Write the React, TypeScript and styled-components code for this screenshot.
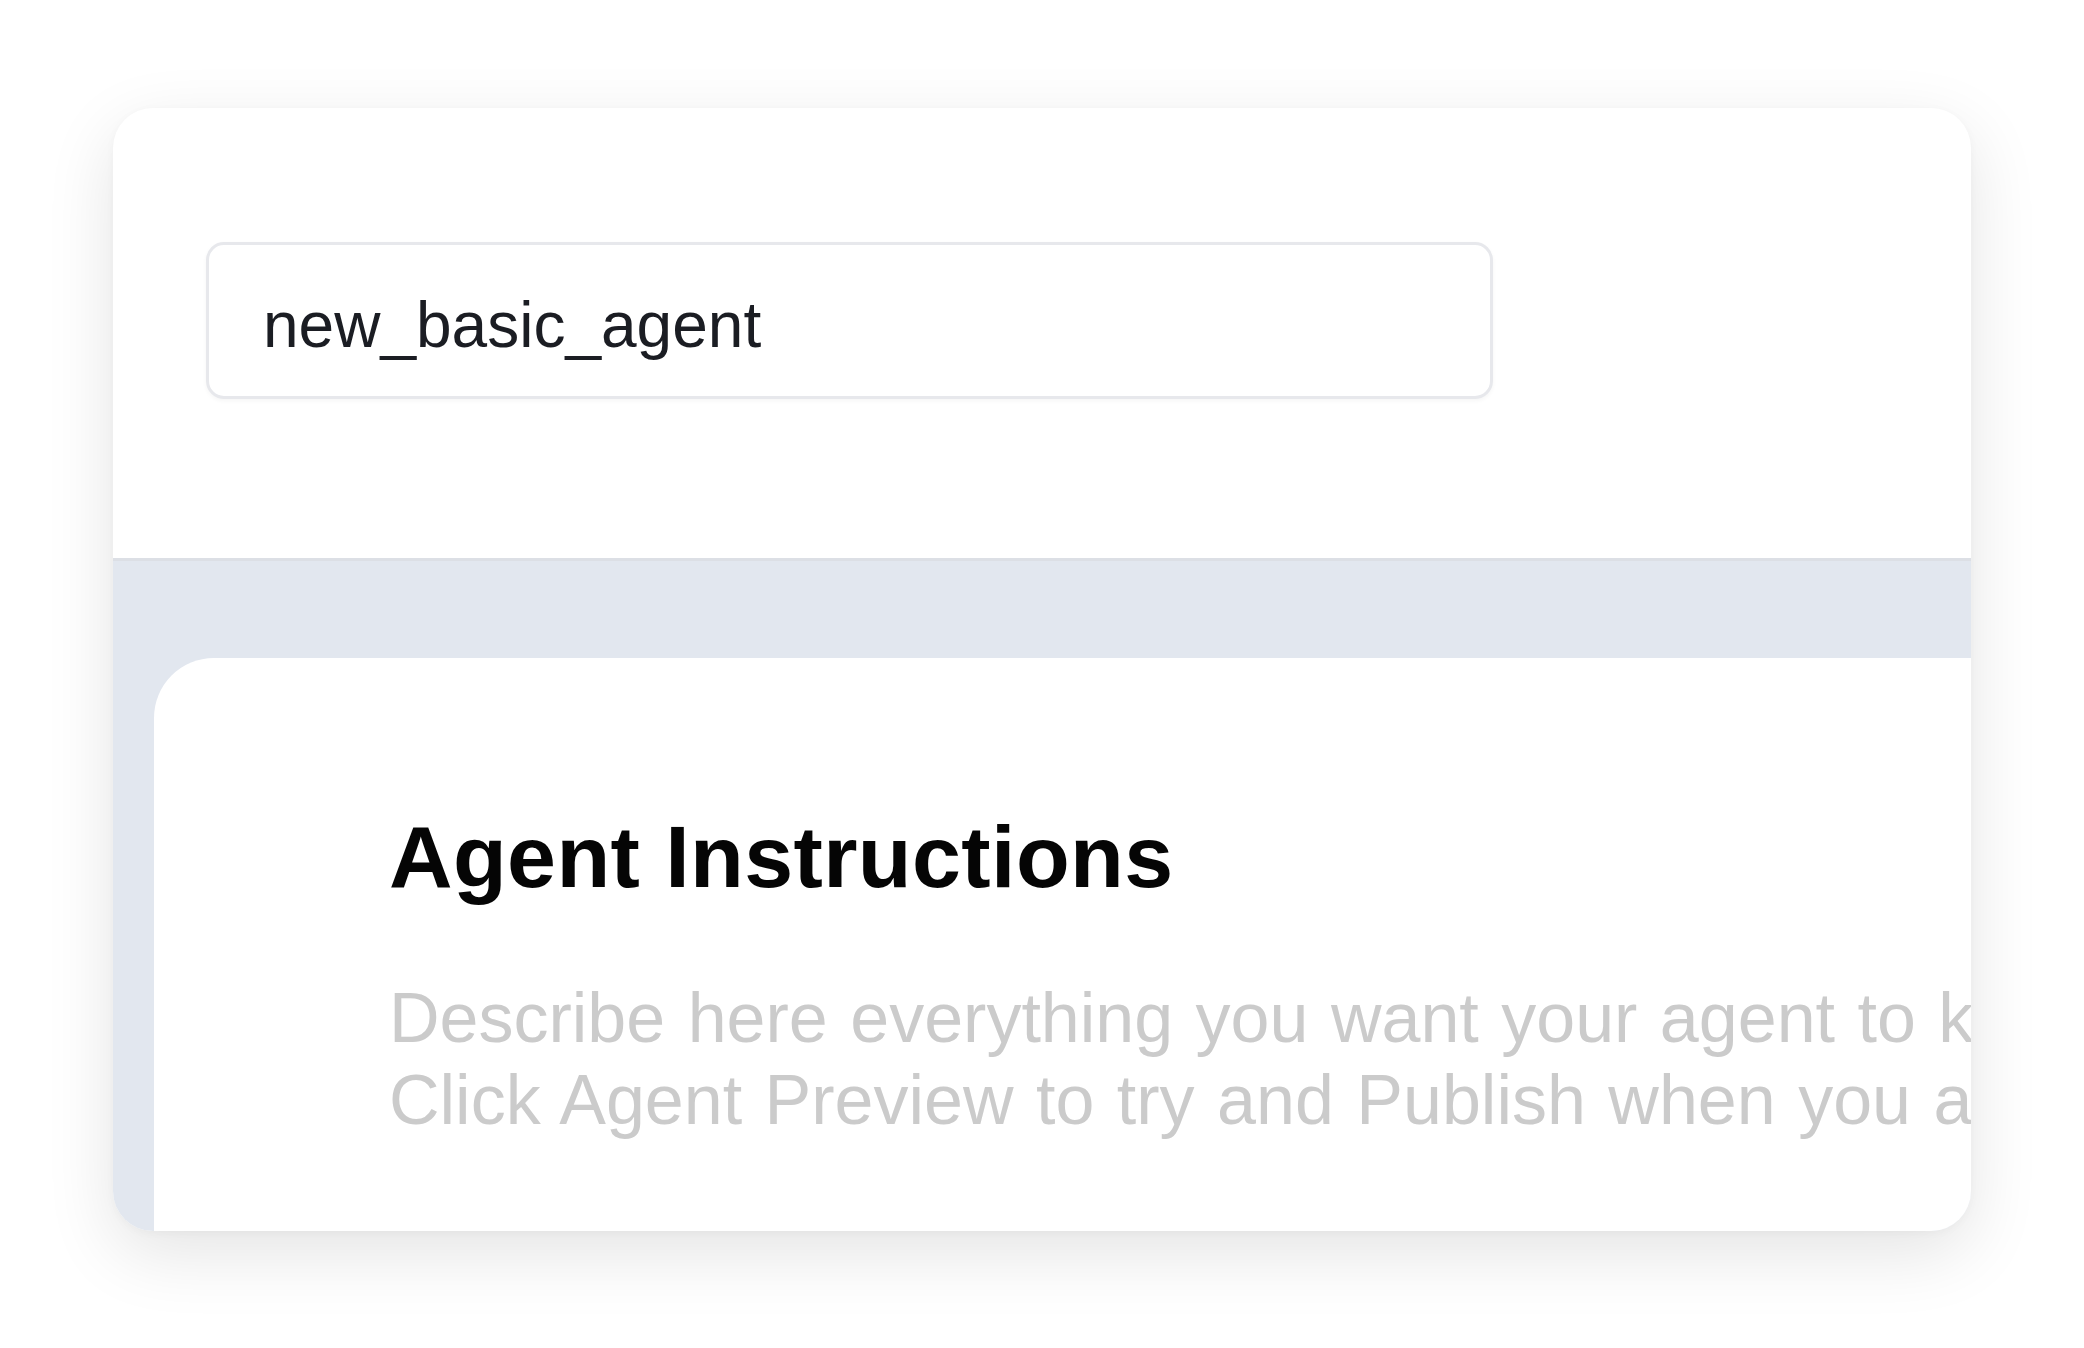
import React from 'react'
import styled, { createGlobalStyle } from 'styled-components'

const GlobalStyle = createGlobalStyle`
  html, body {
    margin: 0;
    padding: 0;
    background: #ffffff;
  }
  body {
    font-family: 'Liberation Sans', Arial, sans-serif;
    width: 2084px;
    height: 1348px;
    overflow: hidden;
  }
`

const Stage = styled.div`
  padding: 108px 113px 0 113px;
`

const Card = styled.div`
  width: 1858px;
  height: 1123px;
  display: flex;
  flex-direction: column;
  background: #ffffff;
  border-radius: 40px;
  overflow: hidden;
  box-shadow: 0 22px 70px rgba(0, 0, 0, 0.11), 0 2px 10px rgba(0, 0, 0, 0.03);
`

const Header = styled.div`
  height: 450px;
  flex-shrink: 0;
  box-sizing: border-box;
  padding: 134px 0 0 93px;
`

const NameField = styled.div`
  width: 1287px;
  height: 157px;
  box-sizing: border-box;
  display: flex;
  align-items: center;
  padding: 8px 0 0 54px;
  border: 3px solid #e7e8ec;
  border-radius: 18px;
  box-shadow: 0 2px 4px rgba(0, 0, 0, 0.04);
  font-size: 64px;
  color: #1b1d23;
`

const Band = styled.div`
  flex: 1;
  display: flex;
  background: #e2e7ef;
  border-top: 3px solid #dcdfe5;
  padding: 97px 0 0 41px;
`

const Panel = styled.div`
  flex: 1;
  background: #ffffff;
  border-top-left-radius: 60px;
  padding: 155px 0 0 235px;
  white-space: nowrap;
  overflow: hidden;
`

const Heading = styled.h2`
  margin: 0;
  font-size: 88px;
  line-height: 88px;
  font-weight: 700;
  letter-spacing: 0.4px;
  color: #050505;
`

const Placeholder = styled.p`
  margin: 76px 0 0 0;
  font-size: 70px;
  line-height: 82px;
  word-spacing: 3px;
  color: #cbcbcb;
`

export default function App() {
  return (
    <>
      <GlobalStyle />
      <Stage>
        <Card>
          <Header>
            <NameField>new_basic_agent</NameField>
          </Header>
          <Band>
            <Panel>
              <Heading>Agent Instructions</Heading>
              <Placeholder>
                Describe here everything you want your agent to know and do.
                <br />
                Click Agent Preview to try and Publish when you are ready.
              </Placeholder>
            </Panel>
          </Band>
        </Card>
      </Stage>
    </>
  )
}
